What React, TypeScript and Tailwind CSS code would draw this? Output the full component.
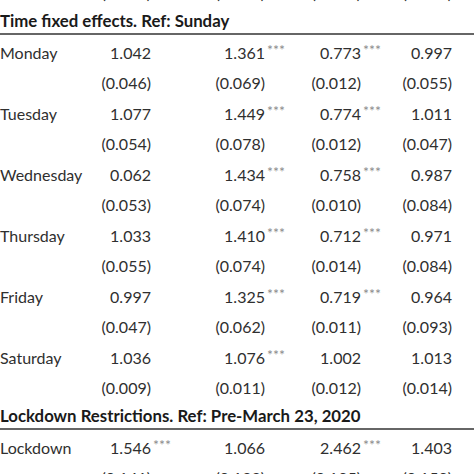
import React from "react";

type Cell = { v: string; s?: boolean };
type Row = { label?: string; cells: Cell[] };

const c = (v: string, s = false): Cell => ({ v, s });

const prior: Row = { cells: [c("(0.016)"), c("(0.021)"), c("(0.013)"), c("(0.019)")] };

const timeRows: Row[] = [
  { label: "Monday", cells: [c("1.042"), c("1.361", true), c("0.773", true), c("0.997")] },
  { cells: [c("(0.046)"), c("(0.069)"), c("(0.012)"), c("(0.055)")] },
  { label: "Tuesday", cells: [c("1.077"), c("1.449", true), c("0.774", true), c("1.011")] },
  { cells: [c("(0.054)"), c("(0.078)"), c("(0.012)"), c("(0.047)")] },
  { label: "Wednesday", cells: [c("0.062"), c("1.434", true), c("0.758", true), c("0.987")] },
  { cells: [c("(0.053)"), c("(0.074)"), c("(0.010)"), c("(0.084)")] },
  { label: "Thursday", cells: [c("1.033"), c("1.410", true), c("0.712", true), c("0.971")] },
  { cells: [c("(0.055)"), c("(0.074)"), c("(0.014)"), c("(0.084)")] },
  { label: "Friday", cells: [c("0.997"), c("1.325", true), c("0.719", true), c("0.964")] },
  { cells: [c("(0.047)"), c("(0.062)"), c("(0.011)"), c("(0.093)")] },
  { label: "Saturday", cells: [c("1.036"), c("1.076", true), c("1.002"), c("1.013")] },
  { cells: [c("(0.009)"), c("(0.011)"), c("(0.012)"), c("(0.014)")] },
];

const lockRows: Row[] = [
  { label: "Lockdown", cells: [c("1.546", true), c("1.066"), c("2.462", true), c("1.403")] },
  { cells: [c("(0.141)"), c("(0.123)"), c("(0.185)"), c("(0.158)")] },
];

function DataRow({ row }: { row: Row }) {
  return (
    <div className="grid grid-cols-[100px_53px_114px_96px_91px] h-[30.5px] items-center">
      <div className="whitespace-nowrap">{row.label ?? ""}</div>
      {row.cells.map((cell, i) => (
        <div key={i} className="flex justify-end whitespace-nowrap">
          <span>{cell.v}</span>
          <span className="w-0 overflow-visible whitespace-nowrap text-[14px] leading-none tracking-[0px] text-[#8c8c8c] self-start mt-[2px] pl-[2px]">
            {cell.s ? "***" : ""}
          </span>
        </div>
      ))}
    </div>
  );
}

function Header({ text }: { text: string }) {
  return (
    <div className="h-[24px] flex items-center font-bold text-[16.8px] text-[#1a1a1a] whitespace-nowrap">
      {text}
    </div>
  );
}

export default function App() {
  return (
    <div
      className="w-[474px] h-[474px] overflow-hidden bg-white text-[16px] text-[#2f2f2f]"
      style={{ fontFamily: "Lato, 'Open Sans', sans-serif" }}
    >
      <div className="mt-[-22px]">
        <DataRow row={prior} />
      </div>
      <Header text="Time fixed effects. Ref: Sunday" />
      <div className="h-[2px] bg-[#666666]" />
      <div className="pt-[3px]">
        {timeRows.map((r, i) => (
          <DataRow key={i} row={r} />
        ))}
      </div>
      <Header text="Lockdown Restrictions. Ref: Pre-March 23, 2020" />
      <div className="h-[2px] bg-[#666666]" />
      <div className="pt-[3px]">
        {lockRows.map((r, i) => (
          <DataRow key={i} row={r} />
        ))}
      </div>
    </div>
  );
}
